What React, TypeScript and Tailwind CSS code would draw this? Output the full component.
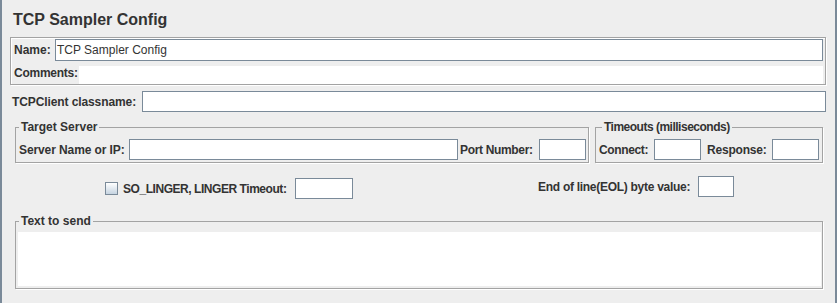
import React from "react";

const font = { fontFamily: '"Liberation Sans", Arial, Helvetica, sans-serif' };

function Field({ className = "" }: { className?: string }) {
  return <div className={`bg-white border border-[#7a8a99] ${className}`} />;
}

function Label({ children, className = "" }: { children: React.ReactNode; className?: string }) {
  return (
    <div className={`text-[12px] leading-[14px] font-bold text-[#333333] whitespace-nowrap ${className}`}>
      {children}
    </div>
  );
}

export default function App() {
  return (
    <div
      style={font}
      className="w-[837px] h-[303px] bg-[#eeeeee] border-l-2 border-r-2 border-[#7a8a99] flex flex-col overflow-hidden"
    >
      {/* Title */}
      <div className="h-[37px] pt-[11px] pl-[11px]">
        <div className="text-[16px] leading-[18px] font-bold text-[#333333]">TCP Sampler Config</div>
      </div>

      {/* Name / Comments panel */}
      <div className="ml-[8px] w-[816px] h-[48px] border border-[#a3a3a3] shadow-[inset_1px_1px_0_#ffffff,1px_1px_0_#ffffff] flex flex-col">
        <div className="h-[23px] pt-[1px] pl-[3px] pr-[2px] flex items-center">
          <Label className="w-[41px]">Name:</Label>
          <div className="w-[768px] h-[22px] bg-white border border-[#7a8a99] flex items-center pl-[1px]">
            <span className="text-[12px] leading-[14px] text-[#333333] whitespace-nowrap">TCP Sampler Config</span>
          </div>
        </div>
        <div className="h-[23px] pl-[3px] pr-[2px] flex items-end">
          <Label className="w-[65px] self-center tracking-[-0.25px]">Comments:</Label>
          <div className="w-[744px] h-[18px] bg-white" />
        </div>
      </div>

      {/* TCPClient classname */}
      <div className="mt-[6px] h-[21px] pl-[10px] flex items-center">
        <Label className="w-[130px] tracking-[-0.1px]">TCPClient classname:</Label>
        <Field className="w-[684px] h-[21px]" />
      </div>

      {/* Target server + Timeouts */}
      <div className="mt-[8px] ml-[13px] flex items-start">
        <fieldset className="w-[574px] border border-[#a3a3a3] pl-[3px] pr-[2px] pt-[5px] pb-[2px] shadow-[1px_1px_0_#ffffff]">
          <legend className="px-[2px] text-[12px] leading-[14px] font-bold text-[#333333] bg-[#eeeeee]">Target Server</legend>
          <div className="flex items-center h-[21px]">
            <Label className="w-[110px] tracking-[-0.1px]">Server Name or IP:</Label>
            <Field className="w-[329px] h-[21px]" />
            <Label className="ml-[2px] w-[79px] tracking-[-0.33px]">Port Number:</Label>
            <Field className="w-[47px] h-[21px]" />
          </div>
        </fieldset>
        <fieldset className="ml-[6px] w-[228px] border border-[#a3a3a3] pl-[3px] pr-[3px] pt-[5px] pb-[2px] shadow-[1px_1px_0_#ffffff]">
          <legend className="ml-[3px] px-[2px] text-[12px] leading-[14px] font-bold text-[#333333] bg-[#eeeeee] tracking-[-0.5px]">
            Timeouts (milliseconds)
          </legend>
          <div className="flex items-center h-[21px]">
            <Label className="w-[55px] tracking-[-0.37px]">Connect:</Label>
            <Field className="w-[47px] h-[21px]" />
            <Label className="ml-[6px] w-[65px] tracking-[-0.2px]">Response:</Label>
            <Field className="w-[47px] h-[21px]" />
          </div>
        </fieldset>
      </div>

      {/* SO_LINGER / EOL row */}
      <div className="mt-[13px] h-[23px] flex items-start">
        <div className="mt-[2px] ml-[103px] h-[21px] flex items-center">
          <div className="w-[13px] h-[13px] border border-[#7a8a99] bg-gradient-to-b from-white to-[#c6d4e1]" />
          <Label className="ml-[5px] w-[172px] tracking-[-0.45px]">SO_LINGER, LINGER Timeout:</Label>
          <Field className="w-[58px] h-[21px]" />
        </div>
        <div className="ml-[185px] h-[21px] flex items-center">
          <Label className="w-[160px] tracking-[-0.28px]">End of line(EOL) byte value:</Label>
          <Field className="w-[36px] h-[21px]" />
        </div>
      </div>

      {/* Text to send */}
      <fieldset className="mt-[15px] ml-[13px] w-[808px] border border-[#a3a3a3] pl-[2px] pr-[1px] pt-[4px] pb-[2px] shadow-[1px_1px_0_#ffffff]">
        <legend className="ml-[1px] px-[2px] text-[12px] leading-[14px] font-bold text-[#333333] bg-[#eeeeee]">Text to send</legend>
        <div className="h-[54px] bg-white" />
      </fieldset>
    </div>
  );
}
